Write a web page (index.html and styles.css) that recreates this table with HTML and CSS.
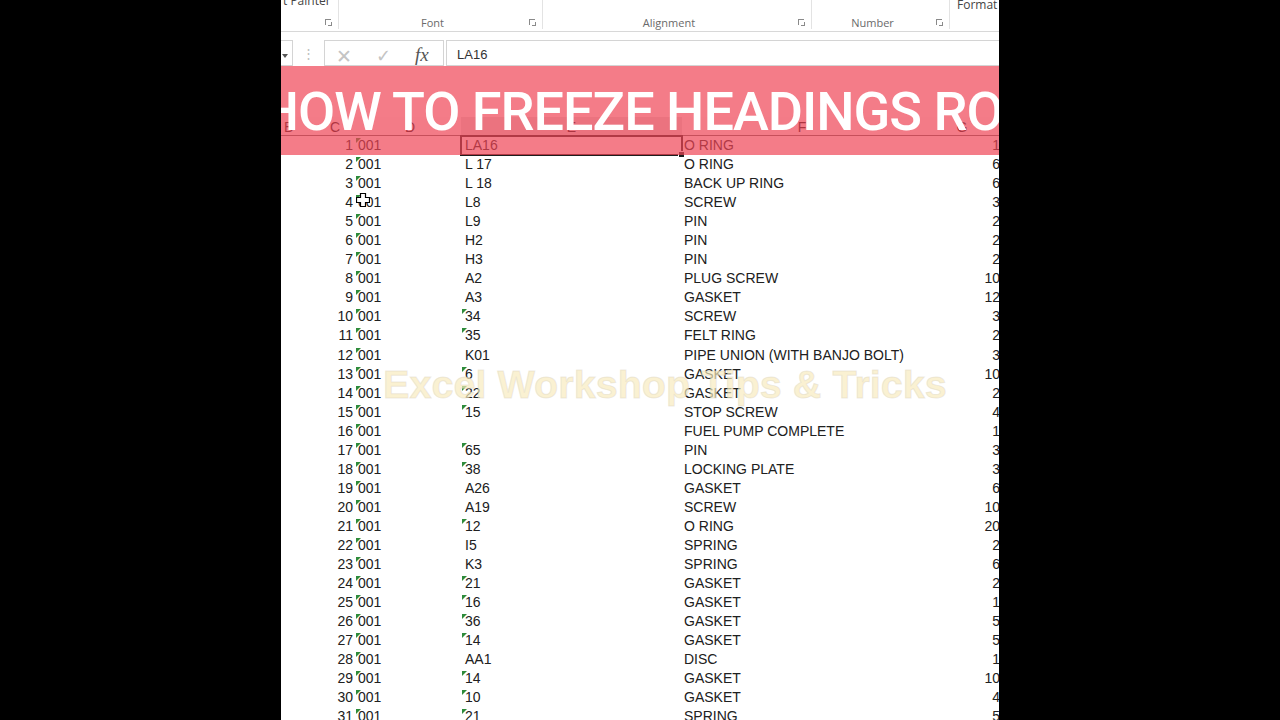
FILE: index.html
```html
<!DOCTYPE html>
<html>
<head>
<meta charset="utf-8">
<link rel="stylesheet" href="styles.css">
</head>
<body>
<div class="screen">
  <div class="panel">
    <div class="ribbon">
      <div class="grp g1"><span class="painter">t Painter</span><span class="launch"></span></div>
      <div class="grp"><span class="glabel">Font</span><span class="launch"></span></div>
      <div class="grp"><span class="glabel">Alignment</span><span class="launch"></span></div>
      <div class="grp"><span class="glabel">Number</span><span class="launch"></span></div>
      <div class="grp last"><span class="fmt">Format</span></div>
    </div>
    <div class="fbar">
      <div class="namebox"><span class="arrow"></span></div>
      <div class="dots">⋮</div>
      <div class="btns">
        <span class="b-x">✕</span>
        <span class="b-ok">✓</span>
        <span class="b-fx">fx</span>
      </div>
      <div class="finput">LA16</div>
    </div>
    <div class="spacer"></div>
    <div class="sheet">
      <div class="hdr">
        <span class="hb">B</span><span class="hc">C</span><span class="hd">D</span><span class="he">E</span><span class="hf">F</span><span class="hg">G</span>
      </div>
      <div class="row"><span class="n">1</span><span class="c t">001</span><span class="e sel">LA16</span><span class="f">O RING</span><span class="g">1</span></div>
      <div class="row"><span class="n">2</span><span class="c t">001</span><span class="e">L 17</span><span class="f">O RING</span><span class="g">6</span></div>
      <div class="row"><span class="n">3</span><span class="c t">001</span><span class="e">L 18</span><span class="f">BACK UP RING</span><span class="g">6</span></div>
      <div class="row"><span class="n">4</span><span class="c t">001</span><span class="e">L8</span><span class="f">SCREW</span><span class="g">3</span></div>
      <div class="row"><span class="n">5</span><span class="c t">001</span><span class="e">L9</span><span class="f">PIN</span><span class="g">2</span></div>
      <div class="row"><span class="n">6</span><span class="c t">001</span><span class="e">H2</span><span class="f">PIN</span><span class="g">2</span></div>
      <div class="row"><span class="n">7</span><span class="c t">001</span><span class="e">H3</span><span class="f">PIN</span><span class="g">2</span></div>
      <div class="row"><span class="n">8</span><span class="c t">001</span><span class="e">A2</span><span class="f">PLUG SCREW</span><span class="g">10</span></div>
      <div class="row"><span class="n">9</span><span class="c t">001</span><span class="e">A3</span><span class="f">GASKET</span><span class="g">12</span></div>
      <div class="row"><span class="n">10</span><span class="c t">001</span><span class="e t">34</span><span class="f">SCREW</span><span class="g">3</span></div>
      <div class="row"><span class="n">11</span><span class="c t">001</span><span class="e t">35</span><span class="f">FELT RING</span><span class="g">2</span></div>
      <div class="row"><span class="n">12</span><span class="c t">001</span><span class="e">K01</span><span class="f">PIPE UNION (WITH BANJO BOLT)</span><span class="g">3</span></div>
      <div class="row"><span class="n">13</span><span class="c t">001</span><span class="e t">6</span><span class="f">GASKET</span><span class="g">10</span></div>
      <div class="row"><span class="n">14</span><span class="c t">001</span><span class="e t">22</span><span class="f">GASKET</span><span class="g">2</span></div>
      <div class="row"><span class="n">15</span><span class="c t">001</span><span class="e t">15</span><span class="f">STOP SCREW</span><span class="g">4</span></div>
      <div class="row"><span class="n">16</span><span class="c t">001</span><span class="e"></span><span class="f">FUEL PUMP COMPLETE</span><span class="g">1</span></div>
      <div class="row"><span class="n">17</span><span class="c t">001</span><span class="e t">65</span><span class="f">PIN</span><span class="g">3</span></div>
      <div class="row"><span class="n">18</span><span class="c t">001</span><span class="e t">38</span><span class="f">LOCKING PLATE</span><span class="g">3</span></div>
      <div class="row"><span class="n">19</span><span class="c t">001</span><span class="e">A26</span><span class="f">GASKET</span><span class="g">6</span></div>
      <div class="row"><span class="n">20</span><span class="c t">001</span><span class="e">A19</span><span class="f">SCREW</span><span class="g">10</span></div>
      <div class="row"><span class="n">21</span><span class="c t">001</span><span class="e t">12</span><span class="f">O RING</span><span class="g">20</span></div>
      <div class="row"><span class="n">22</span><span class="c t">001</span><span class="e">I5</span><span class="f">SPRING</span><span class="g">2</span></div>
      <div class="row"><span class="n">23</span><span class="c t">001</span><span class="e">K3</span><span class="f">SPRING</span><span class="g">6</span></div>
      <div class="row"><span class="n">24</span><span class="c t">001</span><span class="e t">21</span><span class="f">GASKET</span><span class="g">2</span></div>
      <div class="row"><span class="n">25</span><span class="c t">001</span><span class="e t">16</span><span class="f">GASKET</span><span class="g">1</span></div>
      <div class="row"><span class="n">26</span><span class="c t">001</span><span class="e t">36</span><span class="f">GASKET</span><span class="g">5</span></div>
      <div class="row"><span class="n">27</span><span class="c t">001</span><span class="e t">14</span><span class="f">GASKET</span><span class="g">5</span></div>
      <div class="row"><span class="n">28</span><span class="c t">001</span><span class="e">AA1</span><span class="f">DISC</span><span class="g">1</span></div>
      <div class="row"><span class="n">29</span><span class="c t">001</span><span class="e t">14</span><span class="f">GASKET</span><span class="g">10</span></div>
      <div class="row"><span class="n">30</span><span class="c t">001</span><span class="e t">10</span><span class="f">GASKET</span><span class="g">4</span></div>
      <div class="row"><span class="n">31</span><span class="c t">001</span><span class="e t">21</span><span class="f">SPRING</span><span class="g">5</span></div>
    </div>

    <div class="banner"><div class="title">HOW TO FREEZE HEADINGS ROW</div></div>
    <div class="watermark">Excel Workshop Tips &amp; Tricks</div>
    <svg class="cursor" width="14" height="14" viewBox="0 0 14 14">
      <path d="M4.5 0.5h5v4h4v5h-4v4h-5v-4h-4v-5h4z" fill="#fff" stroke="#000" stroke-width="1.2"/>
    </svg>
  </div>
</div>
</body>
</html>
```
FILE: styles.css
```css
html, body {
  margin: 0;
  padding: 0;
  background: #000;
  width: 1280px;
  height: 720px;
  overflow: hidden;
}
.screen {
  display: flex;
  justify-content: center;
  height: 720px;
}
.panel {
  width: 718px;
  height: 720px;
  background: #fff;
  position: relative;
  overflow: hidden;
  font-family: "Liberation Sans", Arial, sans-serif;
}

/* ribbon */
.ribbon {
  height: 31px;
  border-bottom: 1px solid #d8d8d8;
  display: grid;
  grid-template-columns: 58px 204px 269px 138px 1fr;
  font-family: "Open Sans", "Noto Sans", sans-serif;
  font-size: 11px;
  color: #6a6a6a;
}
.grp {
  position: relative;
  height: 29px;
  border-right: 1px solid #e3e3e3;
  display: flex;
  align-items: flex-end;
  justify-content: center;
  padding-right: 16px;
}
.grp.last { border-right: none; }
.glabel {
  line-height: 14px;
  margin-bottom: -1px;
}
.painter {
  position: absolute;
  left: 2px;
  top: -8px;
  font-size: 12px;
  color: #444;
}
.fmt {
  position: absolute;
  left: 7px;
  top: -4px;
  font-size: 12px;
  color: #444;
}
.launch {
  position: absolute;
  right: 7px;
  bottom: 4px;
  width: 5px;
  height: 5px;
  border-left: 1px solid #8a8a8a;
  border-top: 1px solid #8a8a8a;
}
.launch::after {
  content: "";
  position: absolute;
  right: -1px;
  bottom: -1px;
  width: 3px;
  height: 3px;
  border-right: 1px solid #8a8a8a;
  border-bottom: 1px solid #8a8a8a;
}

/* formula bar */
.fbar {
  margin-top: 8px;
  height: 26px;
  display: flex;
  align-items: stretch;
}
.namebox {
  width: 11px;
  border: 1px solid #d4d4d4;
  border-left: none;
  position: relative;
}
.arrow {
  position: absolute;
  left: 1px;
  top: 13px;
  border-left: 3px solid transparent;
  border-right: 3px solid transparent;
  border-top: 4px solid #555;
}
.dots {
  width: 31px;
  text-align: center;
  color: #bdbdbd;
  font-size: 13px;
  line-height: 28px;
}
.btns {
  width: 118px;
  border: 1px solid #d4d4d4;
  position: relative;
}
.b-x {
  position: absolute;
  left: 11px;
  top: 4px;
  font-size: 19px;
  color: #c4c4c4;
  font-family: "DejaVu Sans", sans-serif;
  line-height: 22px;
}
.b-ok {
  position: absolute;
  left: 51px;
  top: 4px;
  font-size: 18px;
  color: #c4c4c4;
  font-family: "DejaVu Sans", sans-serif;
  line-height: 22px;
}
.b-fx {
  position: absolute;
  left: 90px;
  top: 3px;
  font-family: "Liberation Serif", serif;
  font-style: italic;
  font-size: 19px;
  color: #555;
  line-height: 22px;
}
.finput {
  flex: 1;
  margin-left: 2px;
  border: 1px solid #d4d4d4;
  border-right: none;
  padding-left: 10px;
  font-size: 13px;
  line-height: 28px;
  color: #333;
}

.spacer { height: 51px; }

/* sheet */
.sheet {
  font-size: 14px;
  color: #202020;
}
.hdr {
  display: grid;
  grid-template-columns: 30px 48px 102px 221px 240px 80px;
  height: 18px;
  line-height: 20px;
  border-bottom: 1px solid #6a6a6a;
  background: #fafafa;
  font-size: 14px;
  color: #111;
  white-space: nowrap;
}
.hdr span { text-align: center; }
.hdr .hb { text-align: left; padding-left: 3px; }
.hdr .he { background: #e2e2e2; }
.row {
  display: grid;
  grid-template-columns: 74px 106px 221px 240px 78px;
  height: 19.05px;
  line-height: 19px;
  white-space: nowrap;
}
.row span { position: relative; }
.n { text-align: right; padding-right: 2px; }
.c { padding-left: 3px; }
.e { padding-left: 4px; }
.f { padding-left: 2px; }
.g { text-align: right; }
.t::before {
  content: "";
  position: absolute;
  left: 1px;
  top: 2px;
  width: 0;
  height: 0;
  border-top: 5px solid #2e8b3a;
  border-right: 5px solid transparent;
}
.sel {
  outline: 2px solid #1e1e1e;
  outline-offset: -1px;
}
.sel::after {
  content: "";
  position: absolute;
  right: -3px;
  bottom: -3px;
  width: 5px;
  height: 5px;
  background: #1e1e1e;
  border: 1px solid #fff;
}

/* overlays */
.banner {
  position: absolute;
  left: 0;
  right: 0;
  top: 66px;
  height: 89px;
  background: rgba(239, 68, 85, 0.7);
  overflow: hidden;
  display: flex;
  justify-content: center;
}
.title {
  margin-top: 19px;
  padding-left: 30px;
  font-family: Roboto, "Noto Sans", sans-serif;
  font-weight: 500;
  font-size: 54px;
  line-height: 54px;
  letter-spacing: -1px;
  color: #fff;
  white-space: nowrap;
  flex-shrink: 0;
}
.watermark {
  position: absolute;
  left: 102px;
  top: 362px;
  font-family: "Liberation Sans", Arial, sans-serif;
  font-weight: bold;
  font-size: 39.6px;
  line-height: 44px;
  color: rgba(248, 236, 190, 0.7);
  -webkit-text-stroke: 1px rgba(215, 208, 190, 0.4);
  white-space: nowrap;
}
.cursor {
  position: absolute;
  left: 75px;
  top: 193px;
}
```
